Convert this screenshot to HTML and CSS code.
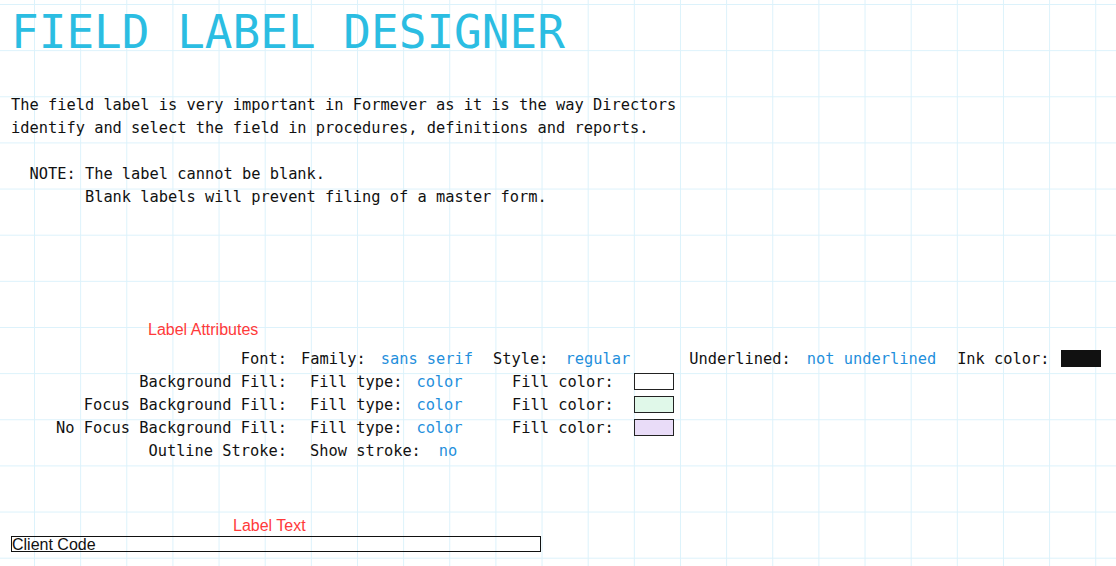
FILE: index.html
```html
<!DOCTYPE html>
<html lang="en">
<head>
<meta charset="utf-8">
<title>Field Label Designer</title>
<link rel="stylesheet" href="styles.css">
</head>
<body>
<main class="page">
  <h1 class="title">FIELD LABEL DESIGNER</h1>

<pre class="intro">The field label is very important in Formever as it is the way Directors
identify and select the field in procedures, definitions and reports.

  NOTE: The label cannot be blank.
        Blank labels will prevent filing of a master form.</pre>

  <section class="attributes">
    <h2 class="section-label attributes-label">Label Attributes</h2>

    <div class="attr-row">
      <span class="attr-name">Font:</span>
      <span class="pair pair-family"><span class="key">Family:</span><span class="value">sans serif</span></span>
      <span class="pair pair-style"><span class="key">Style:</span><span class="value">regular</span></span>
      <span class="pair pair-underline"><span class="key">Underlined:</span><span class="value">not underlined</span></span>
      <span class="pair pair-ink"><span class="key">Ink color:</span><span class="swatch swatch-ink"></span></span>
    </div>

    <div class="attr-row">
      <span class="attr-name">Background Fill:</span>
      <span class="pair pair-filltype"><span class="key">Fill type:</span><span class="value">color</span></span>
      <span class="pair pair-fillcolor"><span class="key">Fill color:</span><span class="swatch swatch-white"></span></span>
    </div>

    <div class="attr-row">
      <span class="attr-name">Focus Background Fill:</span>
      <span class="pair pair-filltype"><span class="key">Fill type:</span><span class="value">color</span></span>
      <span class="pair pair-fillcolor"><span class="key">Fill color:</span><span class="swatch swatch-mint"></span></span>
    </div>

    <div class="attr-row">
      <span class="attr-name">No Focus Background Fill:</span>
      <span class="pair pair-filltype"><span class="key">Fill type:</span><span class="value">color</span></span>
      <span class="pair pair-fillcolor"><span class="key">Fill color:</span><span class="swatch swatch-lilac"></span></span>
    </div>

    <div class="attr-row">
      <span class="attr-name">Outline Stroke:</span>
      <span class="pair pair-stroke"><span class="key">Show stroke:</span><span class="value">no</span></span>
    </div>
  </section>

  <section class="label-text">
    <h2 class="section-label label-text-label">Label Text</h2>
    <div class="text-box">Client Code</div>
  </section>
</main>
</body>
</html>
```

FILE: styles.css
```css
html, body {
  margin: 0;
  padding: 0;
}

body {
  width: 1116px;
  height: 566px;
  overflow: hidden;
  background-color: #ffffff;
  /* light blue drafting grid */
  background-image:
    linear-gradient(to right, #dcf2fb 1px, transparent 1px),
    linear-gradient(to bottom, #dcf2fb 1px, transparent 1px);
  background-size: 46.15px 46.15px;
  background-position: 34px 4px;
  font-family: "DejaVu Sans Mono", "Liberation Mono", monospace;
  color: #111111;
}

.page {
  padding: 4px 0 0 11px;
}

.title {
  margin: 0;
  font-family: "DejaVu Sans Mono", monospace;
  font-size: 46px;
  font-weight: normal;
  line-height: 56px;
  color: #2bbde2;
}

.intro {
  margin: 34px 0 0;
  font-family: "DejaVu Sans Mono", monospace;
  font-size: 15.35px;
  line-height: 23px;
}

.section-label {
  margin: 0;
  font-family: "Liberation Sans", Arial, sans-serif;
  font-size: 16px;
  font-weight: normal;
  line-height: 20px;
  color: #ff3a3a;
}

.attributes {
  margin-top: 111px;
}

.attributes-label {
  padding-left: 137px;
  margin-bottom: 7px;
}

.attr-row {
  display: flex;
  align-items: center;
  height: 23px;
  font-size: 15.35px;
  white-space: pre;
}

.attr-name {
  width: 276px;
  flex: none;
  text-align: right;
}

.pair {
  display: flex;
  align-items: center;
}

.value {
  color: #1f8fdc;
}

.pair-family { margin-left: 14px; }
.pair-family .value { margin-left: 15px; }
.pair-style { margin-left: 20px; }
.pair-style .value { margin-left: 17px; }
.pair-underline { margin-left: 59px; }
.pair-underline .value { margin-left: 16px; }
.pair-ink { margin-left: 21px; }

.pair-filltype {
  margin-left: 23px;
  width: 202px;
}
.pair-filltype .value { margin-left: 14px; }

.pair-stroke { margin-left: 23px; }
.pair-stroke .value { margin-left: 18px; }

.swatch {
  display: inline-block;
  width: 38px;
  height: 15px;
  margin-left: 20px;
  border: 1px solid #222222;
}

.swatch-ink {
  width: 40px;
  height: 17px;
  border: none;
  margin-left: 11px;
  background: #111111;
}

.swatch-white { background: #ffffff; }
.swatch-mint { background: #e0f8e9; }
.swatch-lilac { background: #e9dcf8; }

.label-text {
  margin-top: 54px;
}

.label-text-label {
  padding-left: 222px;
  margin-bottom: 0;
}

.text-box {
  width: 528px;
  height: 14px;
  border: 1px solid #111111;
  font-family: "Liberation Sans", Arial, sans-serif;
  font-size: 16px;
  line-height: 15px;
  color: #111111;
}
```
